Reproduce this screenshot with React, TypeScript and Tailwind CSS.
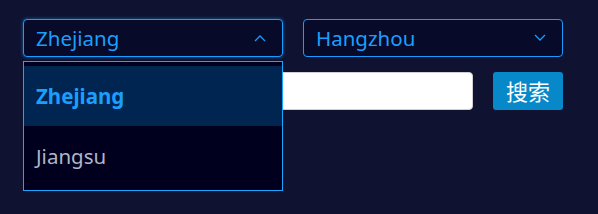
import { useState } from 'react'

const provinces = ['Zhejiang', 'Jiangsu']

function Chevron({ up }: { up?: boolean }) {
  return (
    <svg width="12" height="8" viewBox="0 0 12 8" fill="none" className="text-[#1a9bff]">
      <path
        d={up ? 'M1 7 L6 2 L11 7' : 'M1 1 L6 6 L11 1'}
        stroke="currentColor"
        strokeWidth="1.3"
      />
    </svg>
  )
}

export default function App() {
  const [province] = useState('Zhejiang')

  return (
    <div
      className="min-h-screen bg-[#0f1230] pt-[19px] pl-[23px]"
      style={{ fontFamily: '"Noto Sans", "Noto Sans CJK SC", sans-serif' }}
    >
      <div className="flex gap-5">
        {/* Province */}
        <div className="relative">
          <div className="w-[260px] h-[38px] flex items-center justify-between px-3 rounded-[4px] border border-[#1a9bff] bg-[#070a29] shadow-[0_0_3px_1px_rgba(26,155,255,0.35)]">
            <span className="text-[20.5px] text-[#1a9fff]">{province}</span>
            <span className="pr-1"><Chevron up /></span>
          </div>

          <div className="absolute z-10 left-0 top-[42px] w-[260px] border border-[#1aa6ff] bg-[#00001e] py-1">
            {provinces.map((p) => (
              <div
                key={p}
                className={`h-[60px] flex items-center px-3 text-[20.5px] ${
                  p === province
                    ? 'bg-[#002550] text-[#1a9fff] font-bold'
                    : 'text-[#b0b6c8]'
                }`}
              >
                {p}
              </div>
            ))}
          </div>
        </div>

        {/* City */}
        <div className="w-[260px] h-[38px] flex items-center justify-between px-3 rounded-[4px] border border-[#1a9bff] bg-[#070a29]">
          <span className="text-[20.5px] text-[#1a9fff]">Hangzhou</span>
          <span className="pr-1"><Chevron /></span>
        </div>
      </div>

      <div className="flex gap-5 mt-[15px]">
        <input className="w-[450px] h-[38px] rounded-[4px] bg-white border border-[#d0d0d0] px-3 outline-none" />
        <button className="w-[70px] h-[38px] rounded-[3px] bg-[#0788c8] text-white text-[22px] leading-none">
          搜索
        </button>
      </div>
    </div>
  )
}
